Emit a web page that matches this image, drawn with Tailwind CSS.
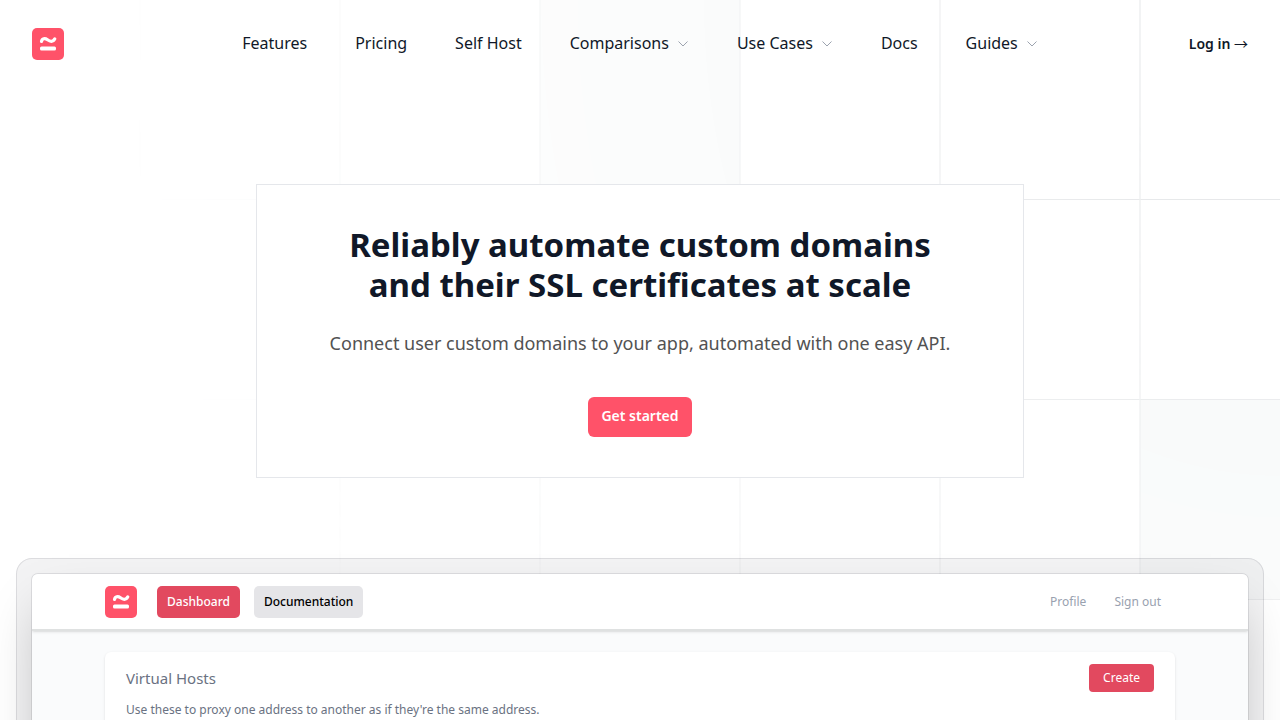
<!DOCTYPE html>
<html lang="en">

<head>
    <meta charset="UTF-8" />
    <meta name="viewport" content="width=device-width, initial-scale=1.0" />
    <title>Reliably automate custom domains</title>
    <script src="https://cdn.jsdelivr.net/npm/@tailwindcss/browser@4"></script>
</head>

<body class="bg-white font-['Noto_Sans',sans-serif] text-gray-900">

    <div class="relative isolate overflow-hidden">

        <!-- Background grid -->
        <svg class="absolute inset-0 -z-10 h-full w-full mask-[radial-gradient(90%_100%_at_top_right,white,transparent)]" aria-hidden="true">
            <defs>
                <pattern id="grid" width="200" height="200" x="50%" y="-1" patternUnits="userSpaceOnUse" patternTransform="translate(-100.5 0)">
                    <path d="M.5 200V.5H200" fill="none" stroke="#e2e4e6" />
                </pattern>
            </defs>
            <svg x="50%" y="-1" overflow="visible" fill="#f6f8f8">
                <path d="M-100 0h200v200h-200ZM500 400h200v200h-200Z" />
            </svg>
            <rect width="100%" height="100%" fill="url(#grid)" />
        </svg>

        <header>
            <nav class="flex items-center justify-between px-8 py-7" aria-label="Main">
                <div class="flex flex-1">
                    <a href="#" aria-label="Home">
                        <svg class="size-8" viewBox="0 0 32 32" fill="none" stroke="#fff">
                            <rect width="32" height="32" rx="5" fill="#ff5269" stroke="none" />
                            <path d="M9.5 13.500c.5-3.200 3.500-3.500 6-1.700s5.500 2.500 7.300-1" stroke-width="3.200" stroke-linecap="round" />
                            <rect x="8" y="18.500" width="16" height="4" rx="1.500" fill="#fff" stroke="none" />
                        </svg>
                    </a>
                </div>
                <div class="flex gap-12 pb-0.5 text-base leading-6">
                    <a href="#">Features</a>
                    <a href="#">Pricing</a>
                    <a href="#">Self Host</a>
                    <button type="button" class="flex items-center gap-2">
                        Comparisons
                        <svg class="size-3" viewBox="0 0 12 12" fill="none" stroke="#9ca3af"><path d="M1.500 4.500 6 9 10.500 4.500" /></svg>
                    </button>
                    <button type="button" class="flex items-center gap-2">
                        Use Cases
                        <svg class="size-3" viewBox="0 0 12 12" fill="none" stroke="#9ca3af"><path d="M1.500 4.500 6 9 10.500 4.500" /></svg>
                    </button>
                    <a href="#">Docs</a>
                    <button type="button" class="flex items-center gap-2">
                        Guides
                        <svg class="size-3" viewBox="0 0 12 12" fill="none" stroke="#9ca3af"><path d="M1.500 4.500 6 9 10.500 4.500" /></svg>
                    </button>
                </div>
                <div class="flex flex-1 justify-end pb-0.5">
                    <a href="#" class="text-sm leading-6 font-semibold">Log in <span class="font-['Noto_Sans_CJK_JP',sans-serif] font-normal" aria-hidden="true">→</span></a>
                </div>
            </nav>
        </header>

        <main class="px-4 pt-24 pb-24">
            <div class="mx-auto max-w-3xl border border-gray-200 bg-white p-10 text-center">
                <h1 class="text-[33px] leading-10 font-bold">Reliably automate custom domains<br>and their SSL certificates at scale</h1>
                <p class="mt-6 text-lg leading-7 text-neutral-600">Connect user custom domains to your app, automated with one easy API.</p>
                <div class="mt-10 flex justify-center">
                    <a href="#" class="rounded-md bg-[#ff5269] px-[13px] pt-[9px] pb-[11px] text-sm leading-5 font-semibold text-white">Get started</a>
                </div>
            </div>

            <!-- App preview -->
            <div class="mt-20 rounded-2xl bg-gray-900/5 p-4 ring-1 ring-gray-900/10 ring-inset">
                <div class="min-h-160 overflow-hidden rounded-md bg-[#fafbfc] text-xs shadow-2xl ring-1 ring-gray-900/10">
                    <div class="border-b-2 border-[#dfe1e1] bg-white px-[73px] shadow-sm">
                        <div class="flex h-[55px] items-center">
                            <svg class="mr-5 size-8" viewBox="0 0 32 32" fill="none" stroke="#fff">
                                <rect width="32" height="32" rx="5" fill="#ff5269" stroke="none" />
                                <path d="M9.5 13.500c.5-3.200 3.500-3.500 6-1.700s5.500 2.500 7.300-1" stroke-width="3.200" stroke-linecap="round" />
                                <rect x="8" y="18.500" width="16" height="4" rx="1.500" fill="#fff" stroke="none" />
                            </svg>
                            <a href="#" class="mr-3.5 rounded-[5px] bg-[#e2495f] px-2.5 py-2 font-medium text-white">Dashboard</a>
                            <a href="#" class="rounded-[5px] bg-[#e5e5e8] px-2.5 py-2 font-medium text-black">Documentation</a>
                            <div class="ml-auto flex gap-7 pr-3.5 text-gray-400">
                                <a href="#">Profile</a>
                                <a href="#">Sign out</a>
                            </div>
                        </div>
                    </div>
                    <div class="px-[73px] pt-[21px]">
                        <div class="min-h-120 rounded-md bg-white px-[21px] py-3 shadow-sm">
                            <div class="flex items-center justify-between">
                                <h2 class="text-[15px] leading-6 text-gray-500">Virtual Hosts</h2>
                                <button type="button" class="rounded bg-[#e2495f] px-3.5 py-1.5 leading-4 text-white">Create</button>
                            </div>
                            <p class="mt-2.5 text-gray-500">Use these to proxy one address to another as if they're the same address.</p>
                        </div>
                    </div>
                </div>
            </div>
        </main>
    </div>

</body>

</html>
